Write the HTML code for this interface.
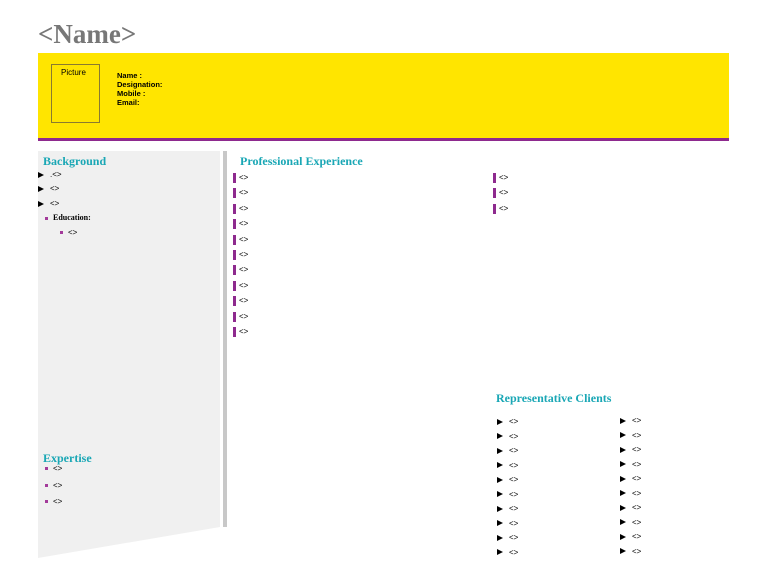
<!DOCTYPE html>
<html><head><style>
body{margin:0;width:768px;height:576px;background:#fff;position:relative;overflow:hidden;font-family:"Liberation Sans",sans-serif}
.a{position:absolute;white-space:nowrap}
.h{font-family:"Liberation Serif",serif;font-weight:bold;color:#1aa7b5;font-size:12px}
.t{font-size:8px;color:#000}
.tri{display:inline-block;width:0;height:0;border-left:6px solid #000;border-top:3.5px solid transparent;border-bottom:3.5px solid transparent;margin-right:6px;vertical-align:middle}
.pb{display:inline-block;width:3px;height:10px;background:#8e2a8e;margin-right:3px;vertical-align:middle}
.sq{display:inline-block;width:3px;height:3px;background:#a33a9a;margin-right:5px;vertical-align:middle}
</style></head><body>
<div class="a" style="left:38px;top:19px;font-family:'Liberation Serif',serif;font-weight:bold;font-size:27px;color:#777">&lt;Name&gt;</div>
<div class="a" style="left:38px;top:53px;width:691px;height:85px;background:#ffe500"></div>
<div class="a" style="left:38px;top:138px;width:691px;height:3px;background:#8e2a8e"></div>
<div class="a" style="left:51px;top:64px;width:47px;height:57px;border:1px solid #8a7a30"></div>
<div class="a t" style="left:61px;top:68px;font-size:8px">Picture</div>
<div class="a t" style="left:117px;top:71px;font-weight:bold;line-height:9px;font-size:7.5px">Name :<br>Designation:<br>Mobile :<br>Email:</div>
<svg class="a" style="left:38px;top:151px" width="182" height="408"><polygon points="0,0 182,0 182,376 0,407" fill="#f0f0f0"/></svg>
<div class="a" style="left:223px;top:151px;width:4px;height:376px;background:#c8c8c8"></div>
<div class="a h" style="left:43px;top:154px">Background</div>
<div class="a t" style="left:38px;top:170px"><span class="tri"></span>.&lt;&gt;</div>
<div class="a t" style="left:38px;top:184px"><span class="tri"></span>&lt;&gt;</div>
<div class="a t" style="left:38px;top:199px"><span class="tri"></span>&lt;&gt;</div>
<div class="a t" style="left:45px;top:213px;font-family:'Liberation Serif',serif;font-weight:bold"><span class="sq"></span>Education:</div>
<div class="a t" style="left:60px;top:228px"><span class="sq"></span>&lt;&gt;</div>
<div class="a h" style="left:43px;top:451px">Expertise</div>
<div class="a t" style="left:45px;top:464px"><span class="sq"></span>&lt;&gt;</div>
<div class="a t" style="left:45px;top:481px"><span class="sq"></span>&lt;&gt;</div>
<div class="a t" style="left:45px;top:497px"><span class="sq"></span>&lt;&gt;</div>
<div class="a h" style="left:240px;top:154px">Professional Experience</div>
<div class="a t" style="left:233px;top:170px;line-height:15.4px">
<div><span class="pb"></span>&lt;&gt;</div><div><span class="pb"></span>&lt;&gt;</div><div><span class="pb"></span>&lt;&gt;</div><div><span class="pb"></span>&lt;&gt;</div><div><span class="pb"></span>&lt;&gt;</div><div><span class="pb"></span>&lt;&gt;</div><div><span class="pb"></span>&lt;&gt;</div><div><span class="pb"></span>&lt;&gt;</div><div><span class="pb"></span>&lt;&gt;</div><div><span class="pb"></span>&lt;&gt;</div><div><span class="pb"></span>&lt;&gt;</div></div>
<div class="a t" style="left:493px;top:170px;line-height:15.4px">
<div><span class="pb"></span>&lt;&gt;</div><div><span class="pb"></span>&lt;&gt;</div><div><span class="pb"></span>&lt;&gt;</div></div>
<div class="a h" style="left:496px;top:391px">Representative Clients</div>
<div class="a t" style="left:497px;top:415px;line-height:14.5px">
<div><span class="tri"></span>&lt;&gt;</div><div><span class="tri"></span>&lt;&gt;</div><div><span class="tri"></span>&lt;&gt;</div><div><span class="tri"></span>&lt;&gt;</div><div><span class="tri"></span>&lt;&gt;</div><div><span class="tri"></span>&lt;&gt;</div><div><span class="tri"></span>&lt;&gt;</div><div><span class="tri"></span>&lt;&gt;</div><div><span class="tri"></span>&lt;&gt;</div><div><span class="tri"></span>&lt;&gt;</div></div>
<div class="a t" style="left:620px;top:414px;line-height:14.5px">
<div><span class="tri"></span>&lt;&gt;</div><div><span class="tri"></span>&lt;&gt;</div><div><span class="tri"></span>&lt;&gt;</div><div><span class="tri"></span>&lt;&gt;</div><div><span class="tri"></span>&lt;&gt;</div><div><span class="tri"></span>&lt;&gt;</div><div><span class="tri"></span>&lt;&gt;</div><div><span class="tri"></span>&lt;&gt;</div><div><span class="tri"></span>&lt;&gt;</div><div><span class="tri"></span>&lt;&gt;</div></div>
</body></html>
